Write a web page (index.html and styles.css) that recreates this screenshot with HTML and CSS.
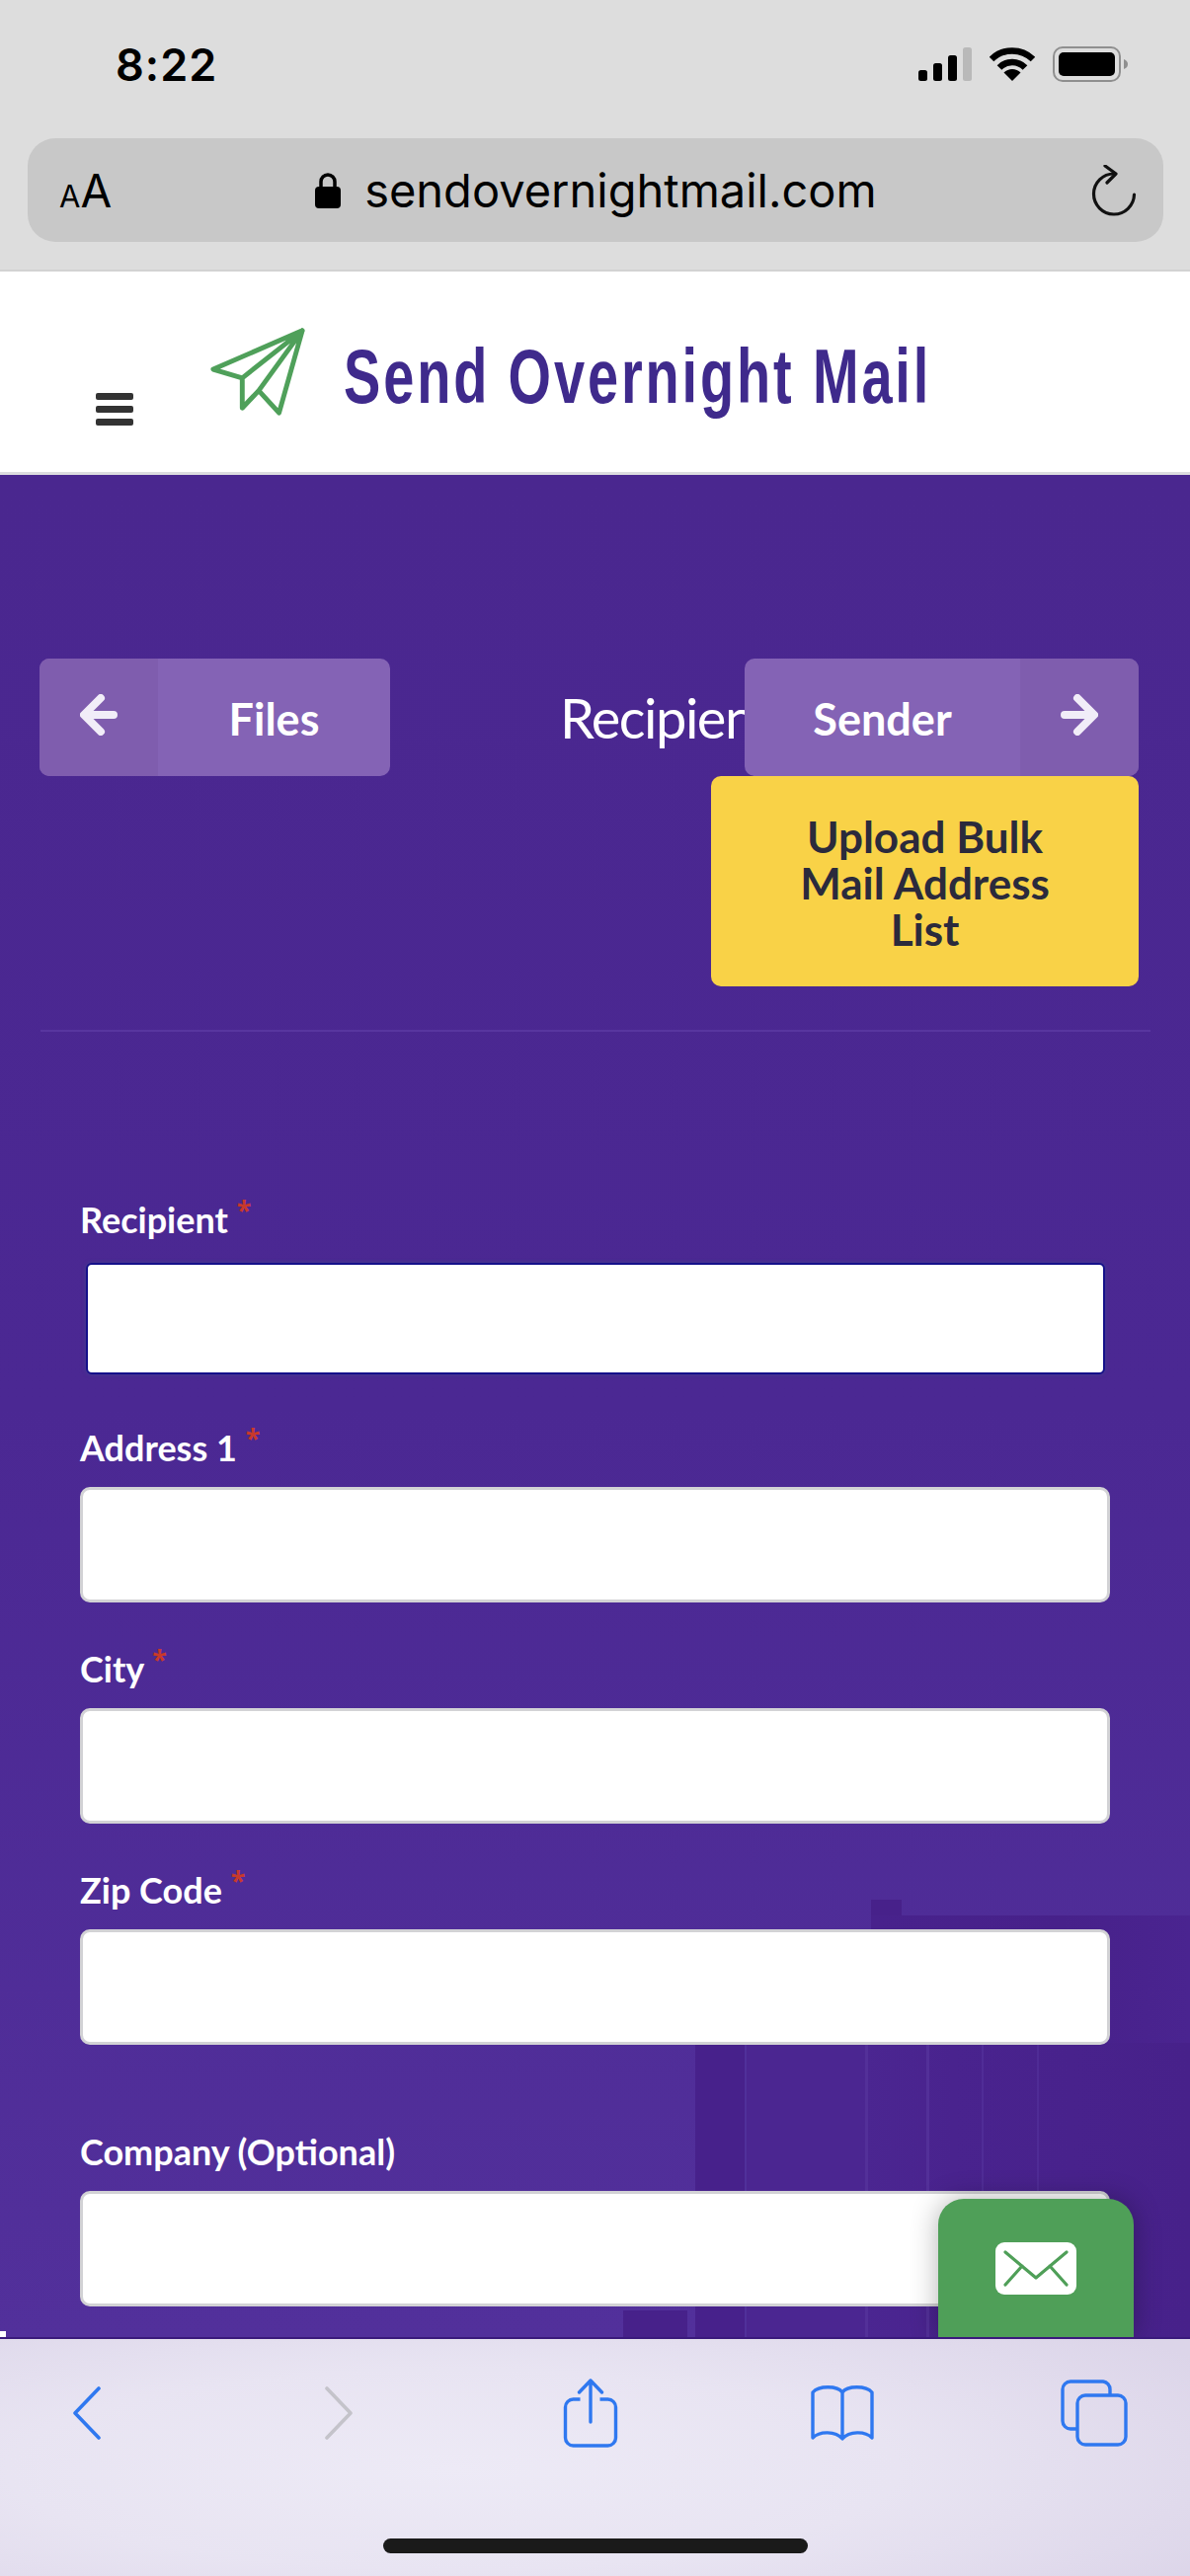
FILE: index.html
```html
<!DOCTYPE html>
<html lang="en">
<head>
    <meta charset="UTF-8">
    <meta name="viewport" content="width=device-width, initial-scale=1.0">
    <title>Send Overnight Mail</title>
    <link rel="stylesheet" href="styles.css">
</head>
<body>
    <div class="browser-top">
        <div class="status-bar">
            <span class="clock">8:22</span>
            <div class="status-icons">
                <svg class="signal" width="54" height="34" viewBox="0 0 54 34">
                    <rect x="0" y="23" width="9" height="11" rx="2.5" fill="#000"/>
                    <rect x="15" y="16" width="9" height="18" rx="2.5" fill="#000"/>
                    <rect x="30" y="8" width="9" height="26" rx="2.5" fill="#000"/>
                    <rect x="45" y="0" width="9" height="34" rx="2.5" fill="#b9b9b9"/>
                </svg>
                <svg class="wifi" width="46" height="34" viewBox="0 0 46 34">
                    <path d="M2 12 A30 30 0 0 1 44 12" fill="none" stroke="#000" stroke-width="6.5"/>
                    <path d="M10 20.5 A18 18 0 0 1 36 20.5" fill="none" stroke="#000" stroke-width="6.5"/>
                    <path d="M14.5 25.5 A12 12 0 0 1 31.5 25.5 L23 34 Z" fill="#000"/>
                </svg>
                <svg class="battery" width="76" height="36" viewBox="0 0 76 36">
                    <rect x="1" y="1" width="67" height="34" rx="9" fill="none" stroke="#8f8f8f" stroke-width="2"/>
                    <rect x="6" y="6" width="57" height="24" rx="5" fill="#000"/>
                    <path d="M72 13 C75 14 76 16 76 18 C76 20 75 22 72 23 Z" fill="#8f8f8f"/>
                </svg>
            </div>
        </div>
        <div class="url-bar">
            <span class="text-size"><small>A</small>A</span>
            <div class="url">
                <svg width="26" height="37" viewBox="0 0 26 37">
                    <path d="M6 16 V10 A7 7 0 0 1 20 10 V16" fill="none" stroke="#000" stroke-width="3.5"/>
                    <rect x="0" y="15" width="26" height="22" rx="4" fill="#000"/>
                </svg>
                <span>sendovernightmail.com</span>
            </div>
            <svg class="reload" width="46" height="52" viewBox="0 0 46 52">
                <path d="M23 9 A20.5 20.5 0 1 0 43.5 30" fill="none" stroke="#111" stroke-width="3.2" stroke-linecap="round"/>
                <path d="M14 1 L25 9 L16 18" fill="none" stroke="#111" stroke-width="3.2" stroke-linecap="round" stroke-linejoin="round"/>
            </svg>
        </div>
    </div>

    <header class="site-header">
        <div class="hamburger"><i></i><i></i><i></i></div>
        <svg class="logo-plane" width="100" height="92" viewBox="210 329 102 92">
            <path d="M307 333 L215 373 L245 382 Z M245 382 V413 L262 395 L307 333 M262 395 L283 418 L307 333" fill="none" stroke="#4fa05a" stroke-width="5" stroke-linejoin="round" stroke-linecap="round"/>
        </svg>
        <span class="site-name">Send Overnight Mail</span>
    </header>

    <main class="page">
        <div class="wizard-nav">
            <a class="nav-btn files-btn">
                <span class="nav-icon">
                    <svg width="38" height="42" viewBox="0 0 38 42"><path d="M21 4 L4 21 L21 38 M5 21 H34" fill="none" stroke="#f1edf8" stroke-width="8" stroke-linecap="round" stroke-linejoin="round"/></svg>
                </span>
                <span class="nav-label">Files</span>
            </a>
            <h1 class="step-title">Recipient</h1>
            <div class="nav-right">
                <a class="nav-btn sender-btn">
                    <span class="nav-label">Sender</span>
                    <span class="nav-icon">
                        <svg width="38" height="42" viewBox="0 0 38 42"><path d="M17 4 L34 21 L17 38 M33 21 H4" fill="none" stroke="#f1edf8" stroke-width="8" stroke-linecap="round" stroke-linejoin="round"/></svg>
                    </span>
                </a>
                <a class="upload-btn">Upload Bulk Mail Address List</a>
            </div>
        </div>

        <hr class="divider">

        <form class="address-form">
            <div class="field field-first">
                <label>Recipient <sup>*</sup></label>
                <div class="input input-focus"></div>
            </div>
            <div class="field">
                <label>Address 1 <sup>*</sup></label>
                <div class="input"></div>
            </div>
            <div class="field">
                <label>City <sup>*</sup></label>
                <div class="input"></div>
            </div>
            <div class="field">
                <label>Zip Code <sup>*</sup></label>
                <div class="input"></div>
            </div>
            <div class="field field-optional">
                <label>Company (Optional)</label>
                <div class="input"></div>
            </div>
        </form>

        <div class="mail-fab">
            <svg width="82" height="53" viewBox="0 0 82 53">
                <rect width="82" height="53" rx="9" fill="#fff"/>
                <path d="M10 10 L41 36 L72 10 M27 24 L10 43 M55 24 L72 43" fill="none" stroke="#4f9f58" stroke-width="3.2" stroke-linecap="round" stroke-linejoin="round"/>
            </svg>
        </div>
        <div class="corner-dot"></div>
    </main>

    <footer class="browser-bottom">
        <div class="toolbar">
            <svg width="68" height="54" viewBox="-19 0 68 54"><path d="M27 2 L3 27 L27 52" fill="none" stroke="#2f78f0" stroke-width="3.6" stroke-linecap="round" stroke-linejoin="round"/></svg>
            <svg width="68" height="54" viewBox="-19 0 68 54"><path d="M3 2 L27 27 L3 52" fill="none" stroke="#c4c3ca" stroke-width="3.6" stroke-linecap="round" stroke-linejoin="round"/></svg>
            <svg width="68" height="70" viewBox="-6.5 0 68 70">
                <path d="M17 21 H10 A8 8 0 0 0 2 29 V60 A8 8 0 0 0 10 68 H45 A8 8 0 0 0 53 60 V29 A8 8 0 0 0 45 21 H37" fill="none" stroke="#2f78f0" stroke-width="3.4"/>
                <path d="M27.5 44 V2 M16 14 L27.5 2 L39 14" fill="none" stroke="#2f78f0" stroke-width="3.4" stroke-linecap="round" stroke-linejoin="round"/>
            </svg>
            <svg width="68" height="56" viewBox="-2 0 68 56">
                <path d="M32 7 C27 0 8 0 2 7 V53 C9 46 25 46 32 54 C39 46 55 46 62 53 V7 C56 0 37 0 32 7 V54" fill="none" stroke="#2f78f0" stroke-width="3.4" stroke-linejoin="round"/>
            </svg>
            <svg width="68" height="68" viewBox="0 0 68 68">
                <path d="M16 50 H10 A8 8 0 0 1 2 42 V10 A8 8 0 0 1 10 2 H43 A8 8 0 0 1 50 10 V15" fill="none" stroke="#2f78f0" stroke-width="3.4"/>
                <rect x="17" y="16" width="49" height="50" rx="8" fill="none" stroke="#2f78f0" stroke-width="3.4"/>
            </svg>
        </div>
        <div class="home-bar"></div>
    </footer>
</body>
</html>
```

FILE: styles.css
```css
* {
    box-sizing: border-box;
}

html, body {
    margin: 0;
    padding: 0;
}

body {
    display: flex;
    flex-direction: column;
    width: 1205px;
    height: 2609px;
    overflow: hidden;
    font-family: Lato, "Open Sans", sans-serif;
}

/* safari chrome, top */
.browser-top {
    height: 275px;
    background: #dddddd;
    border-bottom: 2px solid #d2d2d2;
    font-family: Inter, "Liberation Sans", sans-serif;
    color: #000;
}

.status-bar {
    display: flex;
    justify-content: space-between;
    align-items: center;
    height: 140px;
    padding: 0 63px 10px 117px;
}

.clock {
    font-size: 45px;
    font-weight: 600;
    letter-spacing: 1px;
}

.status-icons {
    display: flex;
    align-items: center;
    gap: 18px;
}

.url-bar {
    display: flex;
    align-items: center;
    justify-content: space-between;
    height: 105px;
    margin: 0 27px 0 28px;
    padding: 0 27px 0 32px;
    background: #c8c8c8;
    border-radius: 28px;
}

.text-size {
    font-size: 46px;
}

.text-size small {
    font-size: 31px;
}

.url {
    display: flex;
    align-items: center;
    gap: 24px;
    margin-left: 206px;
    margin-right: auto;
    font-size: 47px;
}

/* site header */
.site-header {
    position: relative;
    display: flex;
    align-items: center;
    height: 206px;
    background: #fff;
    border-bottom: 3px solid #dcdcdf;
    padding-left: 97px;
}

.hamburger {
    display: flex;
    flex-direction: column;
    gap: 6px;
    width: 38px;
    margin-top: 76px;
}

.hamburger i {
    display: block;
    height: 7px;
    border-radius: 2px;
    background: #333;
}

.logo-plane {
    margin-left: 76px;
    margin-top: -2px;
}

.site-name {
    margin-left: 37px;
    margin-top: 10px;
    font-family: "Liberation Sans", sans-serif;
    font-weight: 700;
    font-size: 78px;
    letter-spacing: 4px;
    white-space: nowrap;
    color: #3f2a8c;
    transform: scaleX(0.717);
    transform-origin: left center;
}

/* purple page, the faint building photo is only hinted at with gradients */
.page {
    position: relative;
    flex: 1;
    overflow: hidden;
    padding-top: 186px;
    background-color: #4c2893;
    background-image:
        linear-gradient(90deg, transparent 0 50px, #50309a 50px 52px, transparent 52px 172px, #533099 172px 175px, transparent 175px 234px, #533099 234px 237px, transparent 237px 290px, #502d97 290px 292px, transparent 292px 346px, #4f2c96 346px 348px, transparent 348px),
        linear-gradient(90deg, #47218b 0 50px, #4b2691 50px 170px, #49238e 260px, #47218a 100%),
        linear-gradient(#47218a, #47218a),
        linear-gradient(90deg, #48228c 0%, #47218a 60%, #4a2490 100%),
        linear-gradient(#47218a, #47218a),
        linear-gradient(180deg, #4a278f 0%, #4b2893 50%, #52309b 100%);
    background-size: 501px 298px, 501px 298px, 65px 27px, 323px 427px, 31px 20px, 100% 100%;
    background-position: right bottom, right bottom, 631px bottom, right bottom, 882px 1443px, 0 0;
    background-repeat: no-repeat;
}

.wizard-nav {
    display: flex;
    align-items: flex-start;
    padding: 0 52px 0 40px;
}

.nav-btn {
    display: flex;
    height: 119px;
    border-radius: 10px;
    overflow: hidden;
    background: #8463b5;
    color: #fff;
    font-weight: 700;
    font-size: 45px;
}

.nav-icon {
    display: flex;
    align-items: center;
    justify-content: center;
    width: 120px;
    height: 100%;
    padding-bottom: 6px;
    background: #7f5dae;
}

.nav-label {
    display: flex;
    align-items: center;
    justify-content: center;
    flex: 1;
    padding-top: 2px;
}

.files-btn {
    flex: none;
    width: 355px;
}

.sender-btn {
    width: 399px;
}

.step-title {
    flex: 1;
    min-width: 0;
    margin: 25px 0 0 172px;
    white-space: nowrap;
    font-size: 56px;
    font-weight: 400;
    letter-spacing: -1.5px;
    line-height: 70px;
    color: #fff;
}

.nav-right {
    position: relative;
    flex: none;
    display: flex;
    flex-direction: column;
    align-items: flex-end;
}

.upload-btn {
    display: flex;
    align-items: center;
    justify-content: center;
    width: 433px;
    height: 213px;
    padding: 4px 80px 0;
    text-align: center;
    border-radius: 10px;
    background: #f9d247;
    color: #2b2a3c;
    font-weight: 700;
    font-size: 44px;
    line-height: 47px;
}

.divider {
    height: 2px;
    margin: 44px 40px 0 41px;
    border: 0;
    background: #58369f;
}

.address-form {
    padding: 167px 81px 0;
}

.field {
    margin-bottom: 44px;
}

.field-first {
    margin-bottom: 51px;
}

.field-optional {
    margin-top: 85px;
}

.field label {
    display: block;
    height: 63px;
    font-size: 36px;
    font-weight: 700;
    line-height: 47px;
    color: #fff;
}

.field sup {
    color: #c8392b;
    font-family: "Open Sans", sans-serif;
    font-size: 27px;
    font-weight: 700;
    line-height: 0;
    vertical-align: 14px;
}

.input {
    height: 117px;
    background: #fff;
    border: 3px solid #d2d2d5;
    border-radius: 10px;
}

.input-focus {
    height: 113px;
    margin: 4px 5px 0 6px;
    border: 2px solid #15108a;
    border-radius: 6px;
    box-shadow: 0 0 4px rgba(60, 70, 140, 0.8);
}

.mail-fab {
    position: absolute;
    right: 57px;
    bottom: 0;
    display: flex;
    justify-content: center;
    width: 198px;
    height: 140px;
    padding-top: 44px;
    background: #4f9f58;
    border-radius: 26px 26px 0 0;
    box-shadow: 0 0 28px rgba(0, 0, 0, 0.3);
}

.corner-dot {
    position: absolute;
    left: 0;
    bottom: 0;
    width: 6px;
    height: 6px;
    background: #fff;
}

/* safari chrome, bottom */
.browser-bottom {
    height: 242px;
    border-top: 2px solid #3a1a7c;
    background: radial-gradient(ellipse 75% 85% at 38% 55%, #edeaf6 0%, #e8e4f2 50%, #dcd5e9 100%);
}

.toolbar {
    display: flex;
    align-items: center;
    justify-content: space-between;
    height: 70px;
    margin-top: 40px;
    padding: 0 63px 0 54px;
}

.home-bar {
    width: 430px;
    height: 15px;
    margin: 92px auto 0;
    border-radius: 8px;
    background: #1a1a1a;
}
```
